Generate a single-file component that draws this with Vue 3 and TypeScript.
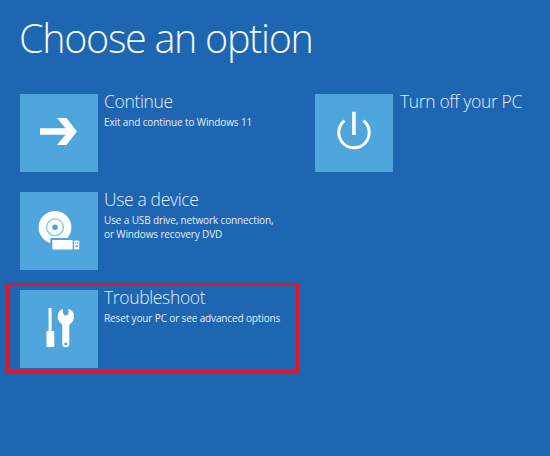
<script setup lang="ts">
const leftOptions = [
  { key: 'continue', title: 'Continue', lines: ['Exit and continue to Windows 11'] },
  { key: 'device', title: 'Use a device', lines: ['Use a USB drive, network connection,', 'or Windows recovery DVD'] },
  { key: 'troubleshoot', title: 'Troubleshoot', lines: ['Reset your PC or see advanced options'] },
]
</script>

<template>
  <div class="screen">
    <h1 class="heading">Choose an option</h1>
    <div class="columns">
      <div class="column left">
        <div
          v-for="opt in leftOptions"
          :key="opt.key"
          class="option"
          :class="{ marked: opt.key === 'troubleshoot' }"
        >
          <div class="tile">
            <svg v-if="opt.key === 'continue'" viewBox="0 0 78 78" width="78" height="78">
              <path d="M37 24H46.5L57 37.5L46.5 51H37L45.5 40.7H20V34.3H45.5Z" fill="#fff" />
            </svg>
            <svg v-else-if="opt.key === 'device'" viewBox="0 0 78 78" width="78" height="78">
              <circle cx="35" cy="35.3" r="16.4" fill="#fff" />
              <circle cx="35" cy="35.3" r="8.4" fill="none" stroke="#7fbfe8" stroke-width="1.2" />
              <circle cx="35" cy="35.3" r="2.8" fill="#4fa6dd" />
              <rect x="30.3" y="46" width="30" height="13.3" fill="#4fa6dd" />
              <rect x="32.3" y="48" width="20.4" height="9.4" rx="0.8" fill="#fff" />
              <rect x="54" y="48.6" width="5.2" height="8.8" fill="#fff" />
              <rect x="55.2" y="50.2" width="1" height="1.6" fill="#4fa6dd" />
              <rect x="57" y="50.2" width="1" height="1.6" fill="#4fa6dd" />
              <rect x="55.2" y="53.4" width="2.8" height="1.6" fill="#4fa6dd" />
            </svg>
            <svg v-else viewBox="0 0 78 78" width="78" height="78">
              <rect x="28.6" y="18" width="3" height="24" fill="#fff" />
              <rect x="26.5" y="41" width="7.8" height="16" rx="0.8" fill="#fff" />
              <path
                fill="#fff"
                fill-rule="evenodd"
                d="M43 18.8 L43 23 Q43.5 25.5 45.8 25.5 Q48 25.5 48.5 23 L48.5 18.8 Q54 20.8 54 26.5 Q54 32 49.3 34.5 L49.3 54 Q49.3 57.3 45.8 57.3 Q42.3 57.3 42.3 54 L42.3 34.5 Q37.7 32 37.7 26.5 Q37.7 20.8 43 18.8 Z M45.8 52.4 a1.6 1.6 0 1 0 .01 0 Z"
              />
            </svg>
          </div>
          <div class="text">
            <div class="title">{{ opt.title }}</div>
            <div class="desc">
              <div v-for="line in opt.lines" :key="line">{{ line }}</div>
            </div>
          </div>
        </div>
      </div>
      <div class="column right">
        <div class="option">
          <div class="tile">
            <svg viewBox="0 0 78 78" width="78" height="78">
              <path d="M38.9 17.7v23.3" fill="none" stroke="#fff" stroke-width="3.6" />
              <path d="M29.5 26.7 A15.2 15.2 0 1 0 48.5 26.7" fill="none" stroke="#fff" stroke-width="3" />
            </svg>
          </div>
          <div class="text">
            <div class="title">Turn off your PC</div>
          </div>
        </div>
      </div>
    </div>
  </div>
</template>

<style>
body {
  margin: 0;
  background: #1e66b1;
}
</style>

<style scoped>
.screen {
  width: 550px;
  height: 456px;
  padding: 11px 0 0 20px;
  box-sizing: border-box;
  background: #1e66b1;
  color: #fff;
  font-family: "Open Sans", "Noto Sans", sans-serif;
  overflow: hidden;
}

.heading {
  margin: 0 0 0 -1px;
  height: 83px;
  font-size: 39.5px;
  line-height: 54px;
  letter-spacing: -1.3px;
  font-weight: 300;
  color: #f4f8fc;
}

.columns {
  display: flex;
}

.column {
  display: flex;
  flex-direction: column;
  gap: 20px;
}

.left {
  width: 295px;
}

.option {
  position: relative;
  display: flex;
  gap: 6px;
  height: 78px;
}

.marked::after {
  content: "";
  position: absolute;
  left: -14px;
  top: -7px;
  width: 287px;
  height: 84px;
  border: 3px solid #e8142d;
  pointer-events: none;
}

.tile {
  width: 78px;
  height: 78px;
  flex: none;
  background: #4fa6dd;
}

.tile svg {
  display: block;
}

.right .text {
  padding-left: 1px;
}

.title {
  font-size: 17.5px;
  line-height: 20px;
  letter-spacing: -0.35px;
  margin-top: -3px;
  font-weight: 300;
  color: #e3eef8;
}

.desc {
  margin-top: 4px;
  font-size: 10px;
  line-height: 14px;
  letter-spacing: -0.13px;
  color: #e3eef8;
}
</style>
